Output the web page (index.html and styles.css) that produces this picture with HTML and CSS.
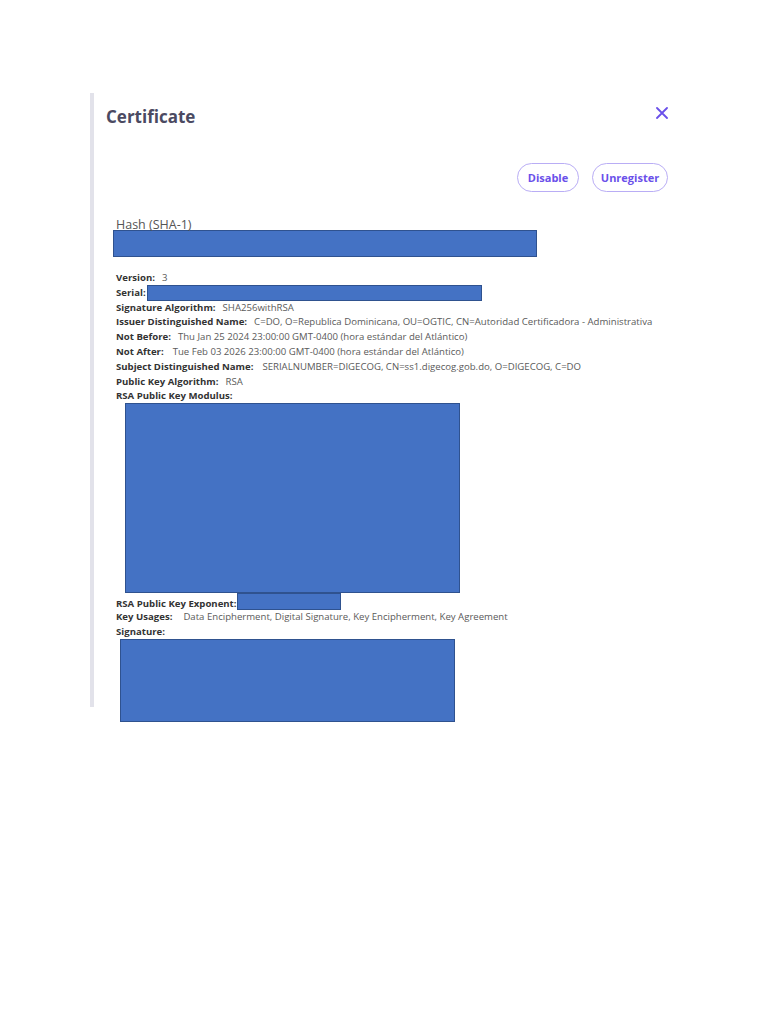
FILE: index.html
```html
<!DOCTYPE html>
<html>
<head>
<meta charset="utf-8">
<link rel="stylesheet" href="styles.css">
</head>
<body>
<div class="panel">
  <div class="header">
    <h1 class="title">Certificate</h1>
    <svg class="close" width="12" height="12" viewBox="0 0 12 12"><path d="M1 1 L11 11 M11 1 L1 11" stroke="#6a50ea" stroke-width="1.8" stroke-linecap="round"/></svg>
  </div>
  <div class="actions">
    <button class="btn">Disable</button>
    <button class="btn">Unregister</button>
  </div>
  <div class="hash-label">Hash (SHA-1)</div>
  <div class="redact hash-box"></div>
  <div class="details">
    <div class="row"><span class="lbl">Version:</span><span class="val">3</span></div>
    <div class="row"><span class="lbl">Serial:</span><span class="redact serial-box"></span></div>
    <div class="row"><span class="lbl">Signature Algorithm:</span><span class="val">SHA256withRSA</span></div>
    <div class="row"><span class="lbl">Issuer Distinguished Name:</span><span class="val">C=DO, O=Republica Dominicana, OU=OGTIC, CN=Autoridad Certificadora - Administrativa</span></div>
    <div class="row"><span class="lbl">Not Before:</span><span class="val">Thu Jan 25 2024 23:00:00 GMT-0400 (hora estándar del Atlántico)</span></div>
    <div class="row"><span class="lbl">Not After:</span><span class="val wide">Tue Feb 03 2026 23:00:00 GMT-0400 (hora estándar del Atlántico)</span></div>
    <div class="row"><span class="lbl">Subject Distinguished Name:</span><span class="val wide">SERIALNUMBER=DIGECOG, CN=ss1.digecog.gob.do, O=DIGECOG, C=DO</span></div>
    <div class="row"><span class="lbl">Public Key Algorithm:</span><span class="val">RSA</span></div>
    <div class="row"><span class="lbl">RSA Public Key Modulus:</span></div>
    <div class="redact modulus-box"></div>
    <div class="row exp-row"><span class="lbl">RSA Public Key Exponent:</span><span class="redact exp-box"></span></div>
    <div class="row"><span class="lbl">Key Usages:</span><span class="val wider">Data Encipherment, Digital Signature, Key Encipherment, Key Agreement</span></div>
    <div class="row"><span class="lbl">Signature:</span></div>
    <div class="redact sig-box"></div>
  </div>
</div>
</body>
</html>
```
FILE: styles.css
```css
html, body {
  margin: 0;
  padding: 0;
  background: #ffffff;
  font-family: "Open Sans", "Liberation Sans", sans-serif;
}
body {
  min-height: 1024px;
}
.panel {
  margin: 93px 0 0 90px;
  width: 578px;
  height: 614px;
  border-left: 4px solid #e2e2ea;
  box-sizing: border-box;
}
.header {
  display: flex;
  justify-content: space-between;
  align-items: flex-start;
  padding: 12px 0 0 12px;
}
.title {
  margin: 0;
  font-size: 17px;
  font-weight: 700;
  color: #4b4a62;
  line-height: 24px;
}
.close {
  margin-top: 2px;
  margin-right: 0;
}
.actions {
  display: flex;
  justify-content: flex-end;
  gap: 13px;
  margin-top: 34px;
}
.btn {
  height: 29px;
  border: 1px solid #b9adf5;
  border-radius: 15px;
  background: #fff;
  color: #6a50ea;
  font-family: "Open Sans", "Liberation Sans", sans-serif;
  font-weight: 700;
  font-size: 11px;
  padding: 0;
}
.btn:first-child { width: 62px; }
.btn:last-child { width: 76px; }
.hash-label {
  margin: 25px 0 0 22px;
  font-size: 12.5px;
  color: #555;
  line-height: 16px;
  font-weight: 400;
}
.redact {
  background: #4472c4;
  border: 1px solid #2f528f;
  box-sizing: border-box;
}
.hash-box {
  margin: -3px 0 0 19px;
  width: 424px;
  height: 27px;
}
.details {
  margin: 14px 0 0 22px;
  font-size: 9.6px;
  line-height: 14.8px;
}
.row {
  display: flex;
  align-items: center;
  height: 14.8px;
  white-space: nowrap;
}
.lbl {
  font-weight: 700;
  color: #333;
}
.val {
  color: #5a5a5a;
  margin-left: 7px;
}
.val.wide { margin-left: 9px; }
.val.wider { margin-left: 11px; }
.serial-box {
  display: inline-block;
  width: 335px;
  height: 16px;
  margin-left: 1px;
}
.modulus-box {
  margin: -1px 0 0 9px;
  width: 335px;
  height: 190px;
}
.exp-row {
  height: 17px;
  align-items: flex-start;
}
.exp-row .lbl { margin-top: 4px; line-height: 14px; }
.exp-box {
  display: inline-block;
  width: 104px;
  height: 17px;
  margin-left: 0;
}
.sig-box {
  margin: -1px 0 0 4px;
  width: 335px;
  height: 83px;
}
```
